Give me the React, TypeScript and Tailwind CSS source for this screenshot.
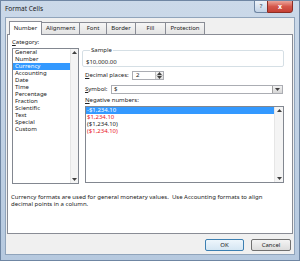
import React from "react";

// --- small drawn glyphs ---
const Arrow = ({ dir = "up", cls = "" }: { dir?: "up" | "down"; cls?: string }) => (
  <svg viewBox="0 0 5 3" className={`w-[5px] h-[3px] ${cls}`}>
    {dir === "up" ? <path d="M0 3 L2.5 0 L5 3Z" fill="#404040" /> : <path d="M0 0 L2.5 3 L5 0Z" fill="#404040" />}
  </svg>
);

const ScrollBar = ({ w = "w-[8px]" }: { w?: string }) => (
  <div className={`${w} flex flex-col justify-between items-center bg-[#f4f4f4] border-l border-[#e6e6e6] py-[2px]`}>
    <Arrow dir="up" />
    <Arrow dir="down" />
  </div>
);

const categories = [
  "General", "Number", "Currency", "Accounting", "Date", "Time",
  "Percentage", "Fraction", "Scientific", "Text", "Special", "Custom",
];

const negatives = [
  { text: "-$1,234.10", red: false, selected: true },
  { text: "$1,234.10", red: true, selected: false },
  { text: "($1,234.10)", red: false, selected: false },
  { text: "($1,234.10)", red: true, selected: false },
];

const tabs = [
  { label: "Number", w: "w-[33px]" },
  { label: "Alignment", w: "w-[39px]" },
  { label: "Font", w: "w-[28px]" },
  { label: "Border", w: "w-[30px]" },
  { label: "Fill", w: "w-[31px]" },
  { label: "Protection", w: "w-[40px]" },
];

export default function App() {
  return (
    <div className="w-[300px] h-[261px] flex flex-col overflow-hidden border border-[#6f86a3] bg-gradient-to-b from-[#cbd9e9] to-[#b6c9df] font-['Noto_Sans','Liberation_Sans',sans-serif] text-[6px] leading-[7px] text-[#222]">
      {/* --- Title bar --- */}
      <div className="h-[16px] flex items-start justify-between pl-[4px] pr-[6px]">
        <span className="text-[6.5px] mt-[4px] text-[#1a1a1a]">Format Cells</span>
        <div className="flex -mt-px">
          <div className="w-[13px] h-[13px] flex items-center justify-center border border-[#6f86a3] border-r-0 rounded-bl-[3px] bg-gradient-to-b from-[#eef3f9] to-[#c3d3e6] text-[6px] text-[#2a3a4e]">
            ?
          </div>
          <div className="w-[26px] h-[13px] flex items-center justify-center border border-[#8b2d24] rounded-br-[3px] bg-gradient-to-b from-[#eaa59b] via-[#d4574b] to-[#c54034] text-[7px] font-bold text-white">
            x
          </div>
        </div>
      </div>

      {/* --- Client area --- */}
      <div className="flex-1 mx-[4px] mb-[5px] bg-[#f0f0f0] border border-[#90a4bb] flex flex-col">
        {/* tabs */}
        <div className="flex items-end h-[16px] pt-[3px] pl-[3px]">
          {tabs.map((t, i) =>
            i === 0 ? (
              <div
                key={t.label}
                className={`${t.w} h-[14px] -mb-px relative z-10 flex items-center justify-center bg-white border border-b-0 border-[#898c95]`}
              >
                {t.label}
              </div>
            ) : (
              <div
                key={t.label}
                className={`${t.w} h-[12px] -ml-px flex items-center justify-center bg-gradient-to-b from-[#f6f6f6] to-[#e3e3e3] border border-b-0 border-[#898c95]`}
              >
                {t.label}
              </div>
            )
          )}
        </div>

        {/* panel */}
        <div className="h-[200px] mx-[1px] bg-white border border-[#898c95] flex flex-col">
          <div className="flex">
            {/* category column */}
            <div className="pl-[4px] pt-[4px] flex flex-col">
              <span className="h-[7px]">
                <span className="underline">C</span>ategory:
              </span>
              <div className="mt-[2px] w-[67px] h-[136px] border border-[#828790] flex">
                <div className="flex-1 flex flex-col">
                  {categories.map((c) => (
                    <div
                      key={c}
                      className={`h-[7px] pl-[2px] ${c === "Currency" ? "bg-[#3399ff] text-white" : ""}`}
                    >
                      {c}
                    </div>
                  ))}
                </div>
                <ScrollBar />
              </div>
            </div>

            {/* right column */}
            <div className="ml-[3px] w-[202px] pt-[12px] flex flex-col">
              <fieldset className="border border-[#d5dfe5] rounded-[2px] pl-[3px] pt-[5px] pb-0 h-[20px]">
                <legend className="ml-[4px] px-[1px] h-[7px]">Sample</legend>
                <div className="h-[7px]">$10,000.00</div>
              </fieldset>

              <div className="flex items-center mt-[4px] pl-[3px]">
                <span className="w-[47px]">
                  <span className="underline">D</span>ecimal places:
                </span>
                <div className="w-[32px] h-[9px] border border-[#abadb3] flex">
                  <span className="flex-1 pl-[3px] leading-[7px]">2</span>
                  <div className="w-[8px] flex flex-col border-l border-[#c5c5c5] bg-gradient-to-b from-[#f4f4f4] to-[#e0e0e0]">
                    <div className="flex-1 flex items-center justify-center border-b border-[#c5c5c5]">
                      <Arrow dir="up" cls="w-[4px] h-[2px]" />
                    </div>
                    <div className="flex-1 flex items-center justify-center">
                      <Arrow dir="down" cls="w-[4px] h-[2px]" />
                    </div>
                  </div>
                </div>
              </div>

              <div className="flex items-center mt-[5px] pl-[3px]">
                <span className="w-[26px]">
                  <span className="underline">S</span>ymbol:
                </span>
                <div className="w-[172px] h-[9px] border border-[#abadb3] flex">
                  <span className="flex-1 pl-[2px] leading-[7px]">$</span>
                  <div className="w-[10px] flex items-center justify-center border-l border-[#a0a0a0] bg-gradient-to-b from-[#f2f2f2] to-[#d6d6d6]">
                    <Arrow dir="down" cls="w-[4px] h-[2px]" />
                  </div>
                </div>
              </div>

              <span className="mt-[3px] pl-[3px] h-[7px]">
                <span className="underline">N</span>egative numbers:
              </span>
              <div className="mt-[2px] ml-[3px] w-[199px] h-[77px] border border-[#828790] flex">
                <div className="flex-1 flex flex-col">
                  {negatives.map((n, i) => (
                    <div
                      key={i}
                      className={`h-[7px] pl-[1px] ${
                        n.selected ? "bg-[#3399ff] text-white" : n.red ? "text-[#e8141e]" : "text-[#222]"
                      }`}
                    >
                      {n.text}
                    </div>
                  ))}
                </div>
                <ScrollBar w="w-[9px]" />
              </div>
            </div>
          </div>

          <p className="mt-[10px] pl-[3px] leading-[6.5px] whitespace-nowrap">
            Currency formats are used for general monetary values.&nbsp; Use Accounting formats to align
            <br />
            decimal points in a column.
          </p>
        </div>

        {/* footer */}
        <div className="flex-1 flex items-start justify-end gap-[7px] pt-[5px] pr-[3px]">
          <button className="w-[39px] h-[12px] rounded-[2px] border border-[#3c7fb1] bg-gradient-to-b from-[#eef6fc] to-[#d5e6f3] text-[6px] leading-[7px]">
            OK
          </button>
          <button className="w-[40px] h-[12px] rounded-[2px] border border-[#707070] bg-gradient-to-b from-[#f4f4f4] to-[#dcdcdc] text-[6px] leading-[7px]">
            Cancel
          </button>
        </div>
      </div>
    </div>
  );
}
